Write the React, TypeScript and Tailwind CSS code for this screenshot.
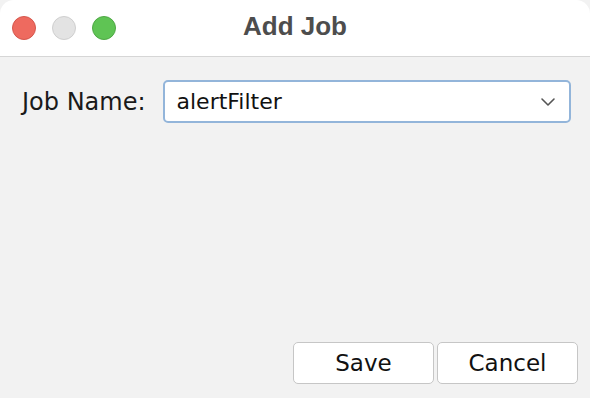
import React from 'react';
import { ChevronDown } from 'lucide-react';

const font = { fontFamily: '"DejaVu Sans", "Noto Sans", sans-serif' };

export default function App() {
  return (
    <div className="w-[590px] h-[398px] flex flex-col bg-[#f2f2f2] overflow-hidden" style={font}>
      {/* title bar */}
      <div className="relative h-[57px] shrink-0 bg-white border-b border-[#d6d6d6] rounded-tl-[14px] rounded-tr-[14px] flex items-center justify-center">
        <div className="absolute left-[12px] top-[16px] flex gap-[16px]">
          <span className="w-[24px] h-[24px] rounded-full bg-[#ee6a5f] border border-[#d5574d]" />
          <span className="w-[24px] h-[24px] rounded-full bg-[#e3e3e3] border border-[#cfcfcf]" />
          <span className="w-[24px] h-[24px] rounded-full bg-[#5fc454] border border-[#4fa845]" />
        </div>
        <span className="text-[26px] font-bold text-[#4d4d4d] pb-[3px]" style={{ fontFamily: '"Liberation Sans", Arial, sans-serif' }}>
          Add Job
        </span>
      </div>

      {/* body */}
      <div className="flex-1 flex flex-col px-[20px] pt-[23px] pb-[14px]">
        <div className="flex items-center gap-[17px]">
          <span className="text-[24px] text-[#1a1a1a] ml-[2px]">Job Name:</span>
          <div className="flex-1 h-[43px] mr-[-1px] rounded-[5px] border-2 border-[#93b5da] bg-white flex items-center pl-[12px] pr-[9px]">
            <span className="flex-1 text-[22px] text-[#111]">alertFilter</span>
            <ChevronDown size={24} strokeWidth={1.6} className="text-[#555]" />
          </div>
        </div>

        <div className="flex-1" />

        <div className="flex justify-end gap-[3px] mr-[-8px]">
          <button className="w-[141px] h-[42px] rounded-[5px] border border-[#c6c6c6] bg-white text-[23px] text-[#111]">
            Save
          </button>
          <button className="w-[141px] h-[42px] rounded-[5px] border border-[#c6c6c6] bg-white text-[23px] text-[#111]">
            Cancel
          </button>
        </div>
      </div>
    </div>
  );
}
